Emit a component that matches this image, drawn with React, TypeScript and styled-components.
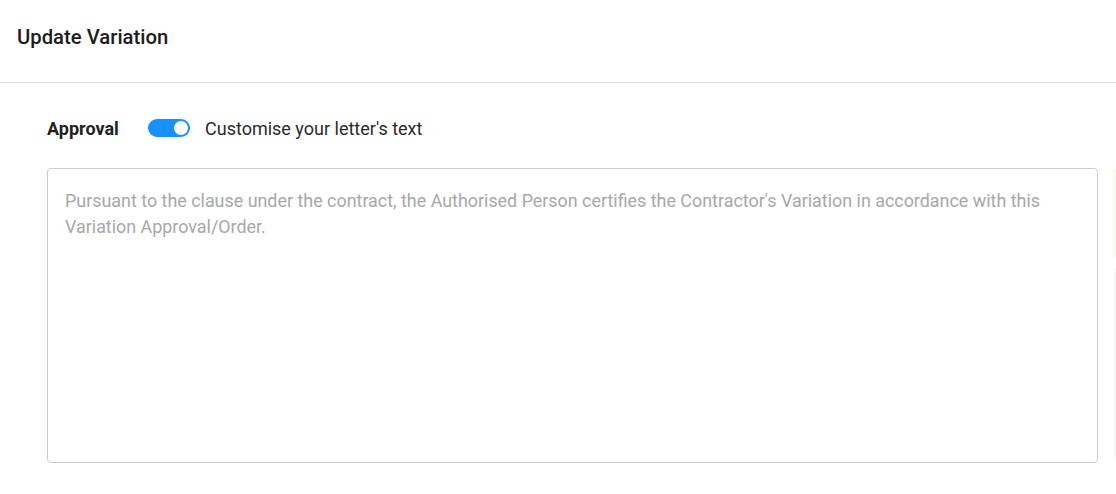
import { useState } from 'react';
import styled, { createGlobalStyle } from 'styled-components';

const GlobalStyle = createGlobalStyle`
  html, body {
    margin: 0;
    padding: 0;
    background: #ffffff;
    font-family: Roboto, "Liberation Sans", Arial, sans-serif;
    color: #1f1f1f;
  }
  * {
    box-sizing: border-box;
  }
`;

const App = () => {
  const [customise, setCustomise] = useState(true);

  return (
    <>
      <GlobalStyle />
      <Page>
        <Header>
          <Title>Update Variation</Title>
        </Header>
        <Body>
          <Main>
            <ApprovalRow>
              <Label>Approval</Label>
              <Switch
                type="button"
                $on={customise}
                onClick={() => setCustomise(!customise)}
                aria-pressed={customise}
              >
                <Knob $on={customise} />
              </Switch>
              <SwitchText>Customise your letter's text</SwitchText>
            </ApprovalRow>
            <LetterText placeholder="Pursuant to the clause under the contract, the Authorised Person certifies the Contractor's Variation in accordance with this Variation Approval/Order." />
          </Main>
          <Side>
            <NoticeCard />
            <InfoCard />
          </Side>
        </Body>
      </Page>
    </>
  );
};

export default App;

const Page = styled.div`
  width: 1116px;
  height: 494px;
  overflow: hidden;
  background: #ffffff;
`;

const Header = styled.div`
  height: 83px;
  padding: 0 17px 8px;
  display: flex;
  align-items: center;
  border-bottom: 1px solid #e0e0e0;
`;

const Title = styled.h1`
  margin: 0;
  font-size: 20.3px;
  font-weight: 500;
  color: #1c1c1c;
`;

const Body = styled.div`
  display: flex;
  gap: 15px;
  padding: 36px 0 0 47px;
`;

const Main = styled.div`
  width: 1051px;
  flex-shrink: 0;
  display: flex;
  flex-direction: column;
  gap: 31px;
`;

const ApprovalRow = styled.div`
  display: flex;
  align-items: center;
  height: 18px;
`;

const Label = styled.span`
  font-size: 18px;
  font-weight: 700;
  color: #222222;
  width: 101px;
`;

const Switch = styled.button<{ $on: boolean }>`
  position: relative;
  width: 42px;
  height: 18px;
  padding: 0;
  border: none;
  border-radius: 9px;
  background: ${({ $on }) => ($on ? '#1890ff' : '#bfbfbf')};
  cursor: pointer;
  margin-right: 15px;
`;

const Knob = styled.span<{ $on: boolean }>`
  position: absolute;
  top: 2px;
  left: ${({ $on }) => ($on ? '26px' : '2px')};
  width: 14px;
  height: 14px;
  border-radius: 50%;
  background: #ffffff;
`;

const SwitchText = styled.span`
  font-size: 18px;
  color: #2a2a2a;
`;

const LetterText = styled.textarea`
  width: 100%;
  height: 295px;
  resize: none;
  border: 1px solid #cccccc;
  border-radius: 4px;
  padding: 19px 17px;
  font-family: Roboto, "Liberation Sans", Arial, sans-serif;
  font-size: 17.9px;
  line-height: 26px;
  color: #333333;
  outline: none;

  &::placeholder {
    color: #a8a8a8;
  }
`;

const Side = styled.div`
  width: 280px;
  flex-shrink: 0;
  display: flex;
  flex-direction: column;
  gap: 7px;
  padding-top: 49px;
`;

const NoticeCard = styled.div`
  height: 92px;
  border-radius: 6px;
  background: #fff8ef;
`;

const InfoCard = styled.div`
  height: 195px;
  border-radius: 6px;
  background: #f7f7f7;
`;
